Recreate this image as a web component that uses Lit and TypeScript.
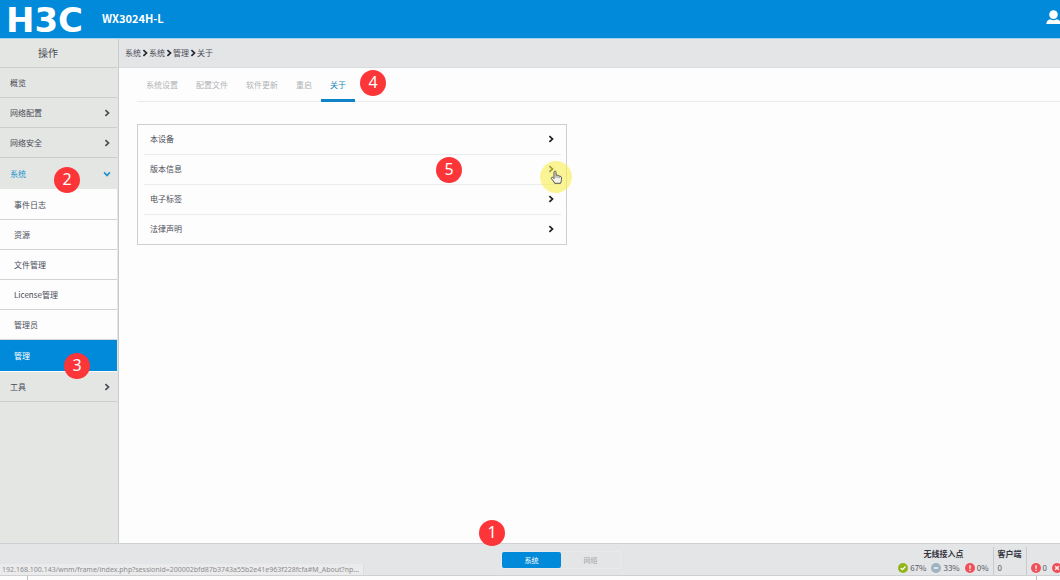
import { LitElement, html, svg, css, nothing } from "lit";
import { customElement, property, state } from "lit/decorators.js";
import { classMap } from "lit/directives/class-map.js";

interface NavItem {
  label: string;
  arrow?: boolean;
  children?: string[];
}

const NAV: NavItem[] = [
  { label: "概览" },
  { label: "网络配置", arrow: true },
  { label: "网络安全", arrow: true },
  {
    label: "系统",
    arrow: true,
    children: ["事件日志", "资源", "文件管理", "License管理", "管理员", "管理"],
  },
  { label: "工具", arrow: true },
];

const CRUMBS = ["系统", "系统", "管理", "关于"];
const TABS = ["系统设置", "配置文件", "软件更新", "重启", "关于"];
const ROWS = ["本设备", "版本信息", "电子标签", "法律声明"];

@customElement("chevron-icon")
class ChevronIcon extends LitElement {
  @property({ type: Boolean, reflect: true }) down = false;

  static styles = css`
    :host {
      display: block;
      flex: none;
      width: 8px;
      height: 8px;
    }
    :host([down]) {
      transform: rotate(90deg);
    }
    svg {
      display: block;
      width: 100%;
      height: 100%;
    }
  `;

  render() {
    return html`<svg viewBox="0 0 8 8" aria-hidden="true">
      <path d="M2.4 1.1 5.5 4 2.4 6.9" fill="none" stroke="currentColor" stroke-width="1.7" />
    </svg>`;
  }
}

@customElement("status-dot")
class StatusDot extends LitElement {
  @property() kind = "ok";

  static styles = css`
    :host {
      display: block;
      flex: none;
      width: 10px;
      height: 10px;
    }
    svg {
      display: block;
    }
  `;

  render() {
    const fill: Record<string, string> = {
      ok: "#93b51a",
      idle: "#9db3c0",
      alert: "#f0505a",
      error: "#f0505a",
    };
    const mark: Record<string, unknown> = {
      ok: svg`<path d="M2.7 5.1 4.4 6.7 7.4 3.5" />`,
      idle: svg`<path d="M2.8 5H7.2" />`,
      alert: svg`<path d="M5 2.2V5.8M5 6.8V8" />`,
      error: svg`<path d="M3.2 3.2 6.8 6.8M6.8 3.2 3.2 6.8" />`,
    };
    return html`<svg width="10" height="10" viewBox="0 0 10 10" aria-hidden="true">
      <circle cx="5" cy="5" r="5" fill=${fill[this.kind]} />
      <g fill="none" stroke="#fff" stroke-width="1.3">${mark[this.kind]}</g>
    </svg>`;
  }
}

@customElement("step-badge")
class StepBadge extends LitElement {
  static styles = css`
    :host {
      position: absolute;
      z-index: 2;
      width: 26px;
      height: 26px;
      border-radius: 50%;
      background: #fb3538;
      color: #fff;
      font: 16px/24px "Noto Sans", sans-serif;
      text-align: center;
      pointer-events: none;
    }
  `;

  render() {
    return html`<slot></slot>`;
  }
}

@customElement("app-root")
class AppRoot extends LitElement {
  @state() private page = "管理";
  @state() private tab = "关于";
  @state() private scope = "系统";

  static styles = css`
    :host {
      display: flex;
      flex-direction: column;
      position: relative;
      height: 100vh;
      overflow: hidden;
      box-sizing: border-box;
      background: #fdfdfd;
      color: #4a4b57;
      font: 8px/12px "Noto Sans CJK SC", sans-serif;
    }
    * {
      box-sizing: border-box;
    }
    button,
    a {
      font: inherit;
      color: inherit;
      text-decoration: none;
    }
    button {
      margin: 0;
      border: 0;
      padding: 0;
      background: none;
      text-align: left;
      cursor: pointer;
    }
    ul {
      list-style: none;
      margin: 0;
      padding: 0;
    }
    .top {
      display: flex;
      flex: none;
      align-items: center;
      height: 39px;
      padding-left: 6px;
      background: #018ad9;
      border-bottom: 1px solid #a3d3ee;
      color: #fff;
    }
    .brand {
      width: 96px;
      padding-top: 2px;
      font: bold 34px/36px "DejaVu Sans", sans-serif;
    }
    .model {
      flex: 1;
      margin: 0;
      font: bold 11px/16px "Noto Sans CJK SC", sans-serif;
      padding-bottom: 2px;
    }
    .user {
      margin-right: -1px;
      padding-bottom: 4px;
    }
    .user svg {
      display: block;
    }
    .body {
      display: flex;
      flex: 1;
      min-height: 0;
    }
    .side {
      flex: none;
      width: 119px;
      border-right: 1px solid #c9cbca;
      padding-right: 1px;
      background: #e4e6e3;
    }
    .side-title {
      height: 29px;
      margin: 0;
      padding-left: 38px;
      border-bottom: 1px solid #cbcdcb;
      font: 10px/28px "Noto Sans CJK SC", sans-serif;
    }
    .item {
      display: flex;
      align-items: center;
      justify-content: space-between;
      width: 100%;
      height: 30px;
      padding: 0 6px 0 10px;
      border-bottom: 1px solid #cbcdcb;
    }
    .item.open {
      height: 31px;
      color: #1b93cf;
      border: 0;
    }
    .subs {
      padding: 1px 0;
      background: #fdfdfd;
    }
    .sub {
      display: block;
      height: 30px;
      padding-left: 14px;
      border-bottom: 1px solid #d2d4d4;
      line-height: 29px;
    }
    .sub.current {
      height: 31px;
      line-height: 31px;
      background: #018ad9;
      border-color: #018ad9;
      color: #fff;
    }
    .main {
      flex: 1;
      min-width: 0;
    }
    .crumbs {
      display: flex;
      align-items: center;
      height: 29px;
      padding-left: 6px;
      border-bottom: 1px solid #dadbdd;
      background: #e4e5e7;
    }
    .crumbs chevron-icon {
      color: #24252f;
    }
    .tabs {
      display: flex;
      margin-left: 18px;
      border-bottom: 1px solid #e9eaeb;
    }
    .tab {
      height: 34px;
      padding: 2px 9px 0;
      border-bottom: 3px solid transparent;
      margin-bottom: -1px;
      color: #b2b3b5;
    }
    .tab.current {
      color: #1b87b8;
      border-color: #0f83c9;
    }
    .card {
      width: 430px;
      max-width: 100%;
      margin: 22px 0 0 18px;
      padding: 0 5px 0 6px;
      border: 1px solid #cfcfd1;
    }
    .card li + li {
      border-top: 1px solid #ececee;
    }
    .row {
      display: flex;
      align-items: center;
      justify-content: space-between;
      width: 100%;
      height: 29px;
      padding: 0 6px 1px;
    }
    .row chevron-icon {
      color: #1c1c22;
    }
    .foot {
      display: grid;
      grid-template-columns: 1fr auto 1fr;
      flex: none;
      position: relative;
      height: 33px;
      padding-left: 62px;
      border: solid #cfd0d3;
      border-width: 1px 0;
      background: #e4e5e7;
    }
    .toggle {
      grid-column: 2;
      display: flex;
      align-self: center;
      border: 1px solid #e9eaeb;
      border-radius: 2px;
    }
    .toggle button {
      width: 59px;
      height: 16px;
      border-radius: 2px;
      color: #a5a6a9;
      font-size: 7px;
      text-align: center;
    }
    .toggle .current {
      background: #018ad9;
      color: #fff;
    }
    .stats {
      display: flex;
      justify-content: flex-end;
      align-items: flex-end;
      margin-right: -6px;
      color: #55565e;
    }
    .stat {
      padding: 0 4px;
      border-left: 1px solid #c9cacd;
    }
    .stat:first-child {
      border: 0;
    }
    .stat h3 {
      margin: 0;
      font: bold 8px/13px "Noto Sans CJK SC", sans-serif;
      text-align: center;
      color: #33343c;
    }
    .values {
      display: flex;
      gap: 5px;
      height: 15px;
      line-height: 15px;
    }
    .value {
      display: flex;
      align-items: center;
      gap: 2px;
    }
    .alerts {
      display: flex;
      align-items: flex-end;
      height: 28px;
    }
    .link {
      position: absolute;
      left: 0;
      bottom: 0;
      padding: 0 4px 0 2px;
      background: #ebebec;
      color: #8b8c8e;
      font: 7px/11px "Noto Sans", sans-serif;
      white-space: nowrap;
      border: solid #dcdddf;
      border-width: 0 1px 0 0;
    }
    .edge {
      display: flex;
      justify-content: space-between;
      flex: none;
      height: 4px;
      padding: 0 23px 0 27px;
    }
    .edge i {
      width: 1px;
      background: #bfc0c2;
    }
    .one {
      left: 479px;
      bottom: 34px;
    }
    .two {
      left: 54px;
      top: 167px;
    }
    .three {
      left: 64px;
      top: 353px;
    }
    .four {
      left: 360px;
      top: 70px;
    }
    .five {
      left: 436px;
      top: 157px;
    }
    .pointer {
      position: absolute;
      left: 540px;
      top: 161px;
      pointer-events: none;
    }
  `;

  private navItem(item: NavItem) {
    const open = !!item.children;
    return html`<li>
      <button class=${classMap({ item: true, open })} aria-expanded=${open ? "true" : nothing}>
        <span>${item.label}</span>
        ${item.arrow ? html`<chevron-icon ?down=${open}></chevron-icon>` : nothing}
      </button>
      ${item.children
        ? html`<ul class="subs">
            ${item.children.map(
              (name) => html`<li>
                <a
                  class=${classMap({ sub: true, current: name === this.page })}
                  href="#"
                  @click=${(e: Event) => {
                    e.preventDefault();
                    this.page = name;
                  }}
                  >${name}</a
                >
              </li>`
            )}
          </ul>`
        : nothing}
    </li>`;
  }

  private value(kind: string, text: string) {
    return html`<span class="value"><status-dot kind=${kind}></status-dot>${text}</span>`;
  }

  render() {
    return html`
      <header class="top">
        <div class="brand">H3C</div>
        <h1 class="model">WX3024H-L</h1>
        <button class="user" aria-label="用户">
          <svg width="15" height="14" viewBox="0 0 15 14">
            <circle cx="7.5" cy="4.6" r="4.3" fill="#fff" />
            <path d="M.3 14C.5 11 2 9.600 4.200 9.200Q7.500 11.400 10.800 9.200C13 9.600 14.500 11 14.700 14Z" fill="#fff" />
          </svg>
        </button>
      </header>

      <div class="body">
        <nav class="side">
          <h2 class="side-title">操作</h2>
          <ul>
            ${NAV.map((item) => this.navItem(item))}
          </ul>
        </nav>
        <main class="main">
          <div class="crumbs">
            ${CRUMBS.map(
              (name, i) => html`${i ? html`<chevron-icon></chevron-icon>` : nothing}<span>${name}</span>`
            )}
          </div>
          <div class="tabs" role="tablist">
            ${TABS.map(
              (name) => html`<button
                role="tab"
                class=${classMap({ tab: true, current: name === this.tab })}
                aria-selected=${name === this.tab}
                @click=${() => (this.tab = name)}
              >
                ${name}
              </button>`
            )}
          </div>
          <ul class="card">
            ${ROWS.map(
              (name) => html`<li>
                <button class="row"><span>${name}</span><chevron-icon></chevron-icon></button>
              </li>`
            )}
          </ul>
        </main>
      </div>

      <footer class="foot">
        <div class="toggle">
          ${["系统", "网络"].map(
            (name) => html`<button
              class=${classMap({ current: name === this.scope })}
              @click=${() => (this.scope = name)}
            >
              ${name}
            </button>`
          )}
        </div>
        <div class="stats">
          <div class="stat">
            <h3>无线接入点</h3>
            <div class="values">
              ${this.value("ok", "67%")} ${this.value("idle", "33%")} ${this.value("alert", "0%")}
            </div>
          </div>
          <div class="stat">
            <h3>客户端</h3>
            <div class="values">0</div>
          </div>
          <div class="stat alerts">
            <div class="values">${this.value("alert", "0")} ${this.value("error", "")}</div>
          </div>
        </div>
        <div class="link">
          192.168.100.143/wnm/frame/index.php?sessionid=200002bfd87b3743a55b2e41e963f228fcfa#M_About?np...
        </div>
      </footer>
      <div class="edge"><i></i><i></i></div>

      <svg class="pointer" width="32" height="32" viewBox="0 0 32 32" aria-hidden="true">
        <circle cx="16" cy="16" r="16" fill="#f8ee4e" fill-opacity=".6" />
        <path
          d="M14 11.300C14 9.700 16 9.700 16 11.300V14.500C16.500 13.700 17.900 13.900 18 14.900C18.700 14.300 19.700 14.600 19.800 15.500C20.600 15.100 21.500 15.600 21.500 16.500V18.500C21.500 20.200 20.800 20.800 20.600 22.300H14.600C14.300 20.700 12.400 19.300 11.400 17.500C11 16.300 12.400 15.800 13.200 16.700L14 17.600Z"
          fill="#f4f3ee"
          stroke="#55544a"
        />
        <path d="M16 14.500V17M18 15V17M19.800 15.500V17.200" stroke="#77766a" stroke-width=".7" />
      </svg>
      <step-badge class="one">1</step-badge>
      <step-badge class="two">2</step-badge>
      <step-badge class="three">3</step-badge>
      <step-badge class="four">4</step-badge>
      <step-badge class="five">5</step-badge>
    `;
  }
}
